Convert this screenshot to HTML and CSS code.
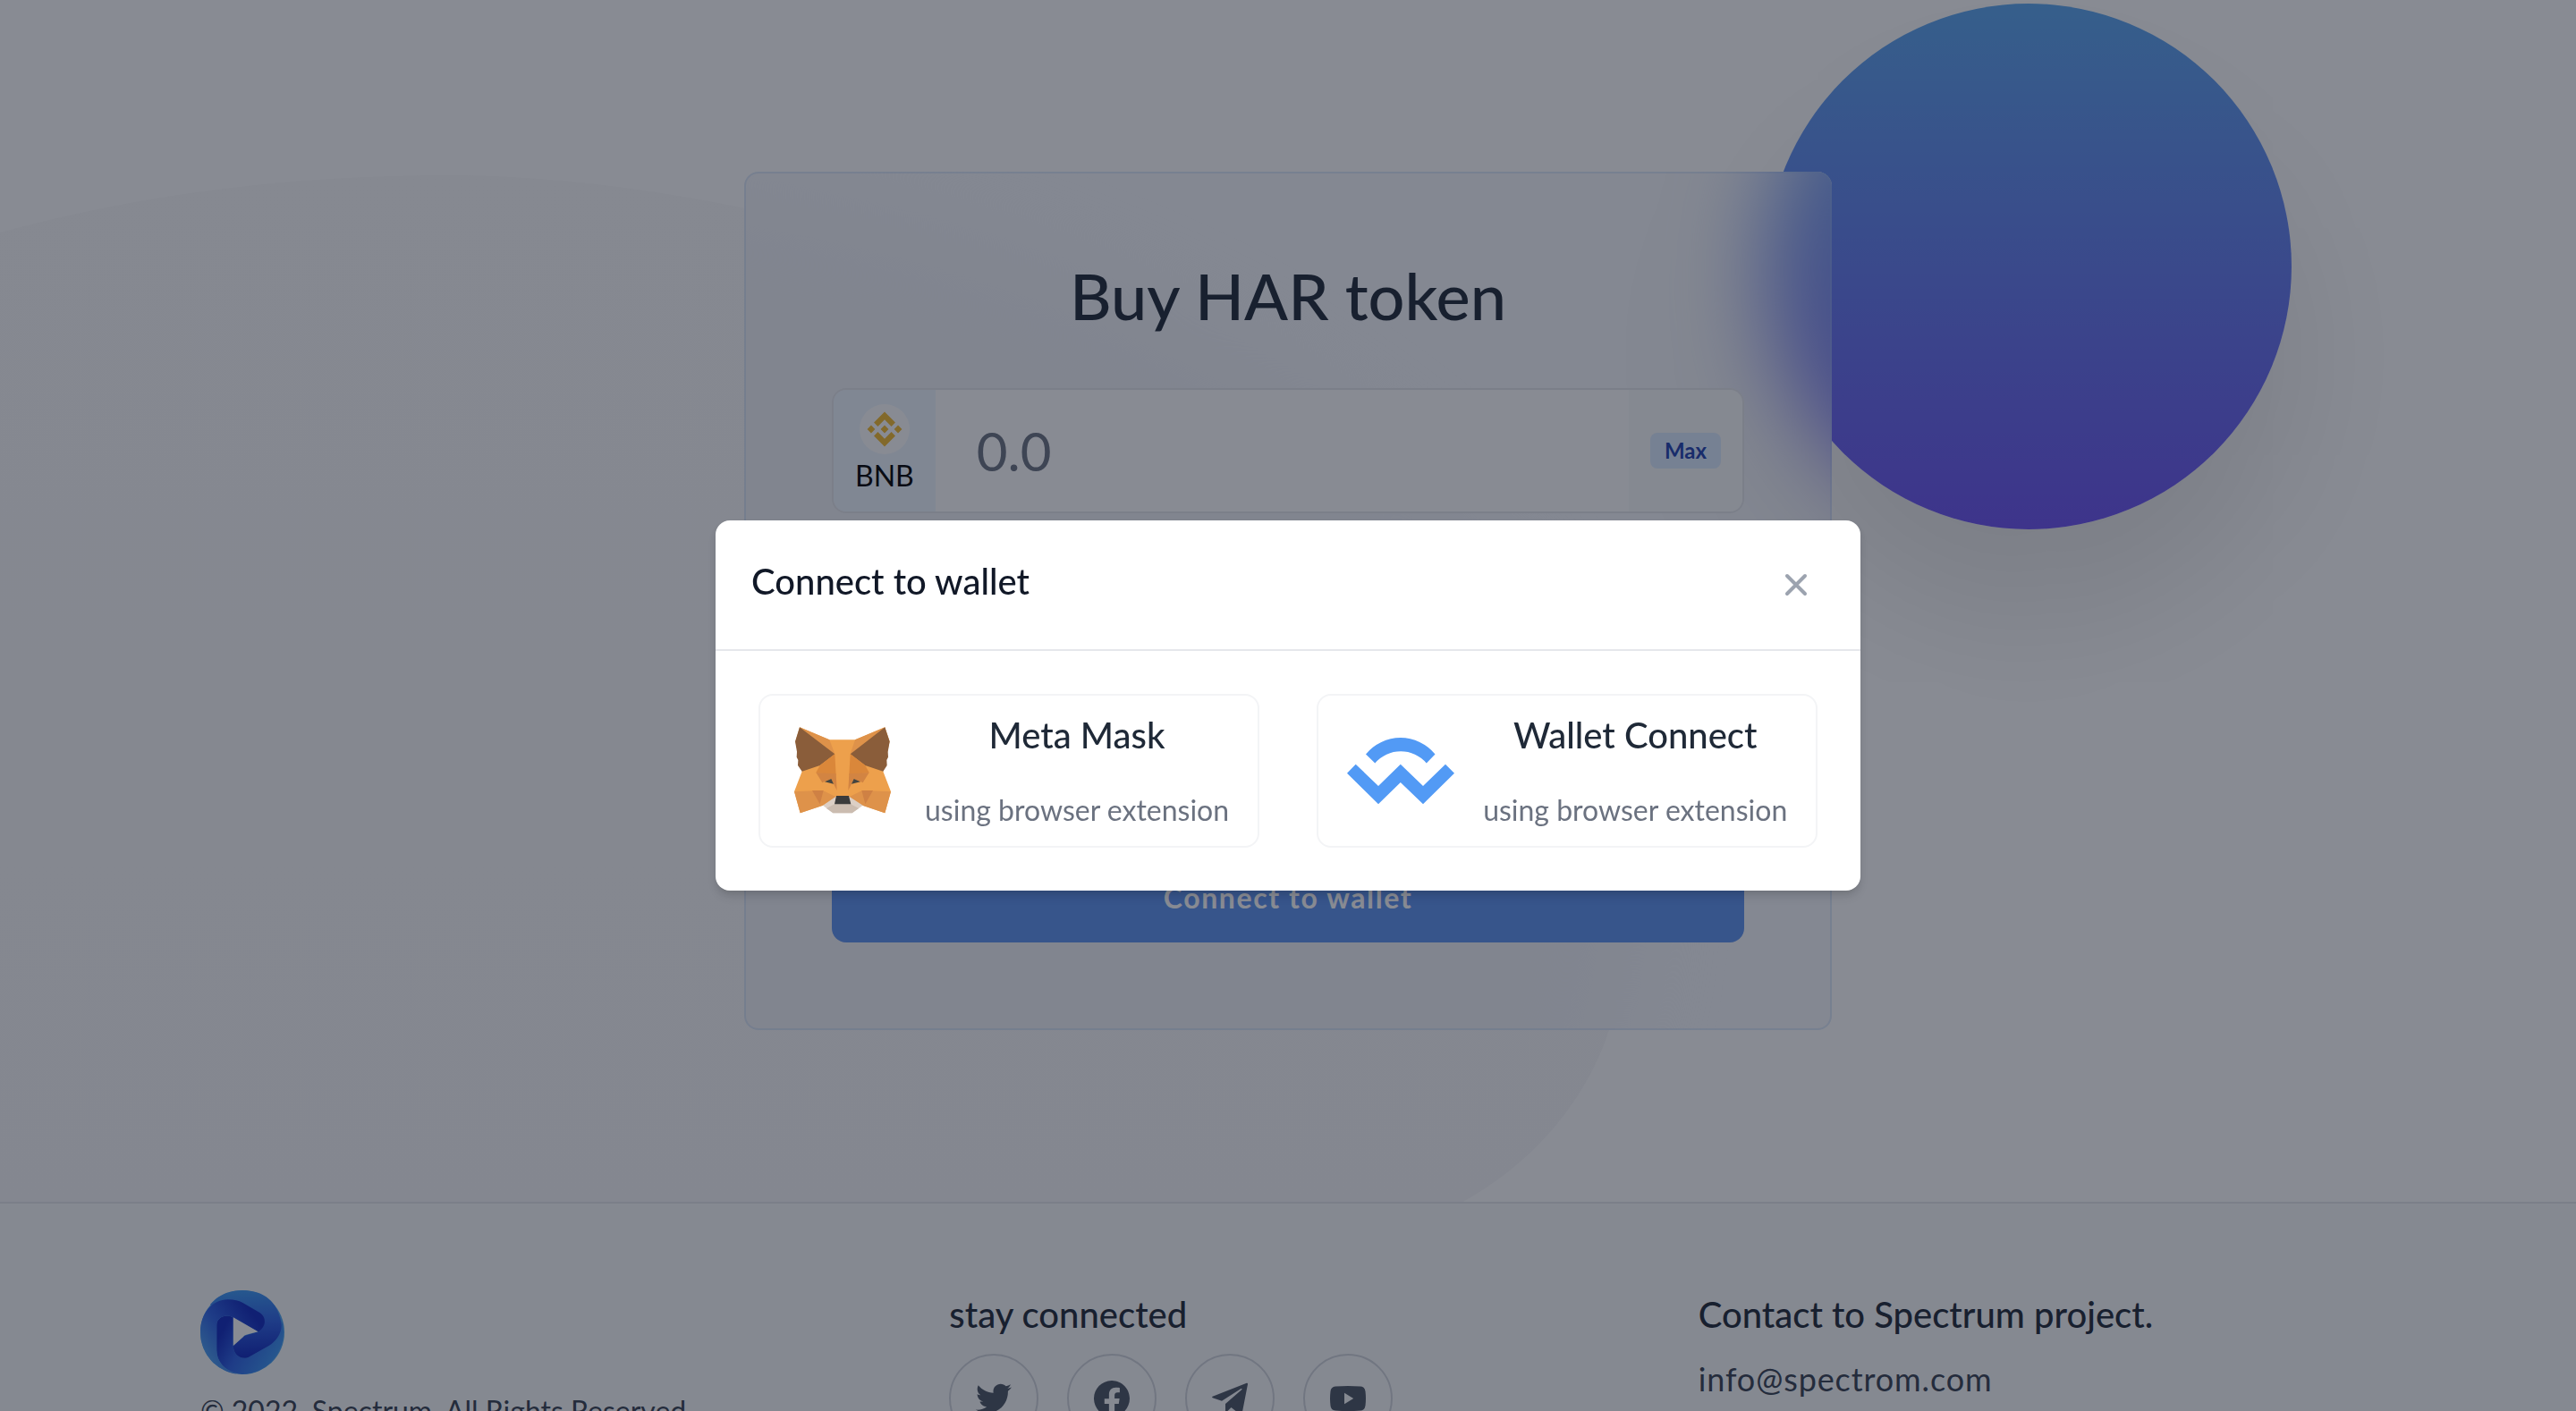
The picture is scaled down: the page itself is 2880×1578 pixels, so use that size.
FILE: index.html
```html
<!DOCTYPE html>
<html lang="en">
<head>
    <meta charset="UTF-8">
    <meta name="viewport" content="width=device-width, initial-scale=1.0">
    <title>Spectrum - Buy HAR token</title>
    <link rel="stylesheet" href="styles.css">
</head>
<body>
    <main class="hero">
        <svg class="blob" viewBox="0 0 2880 1344" preserveAspectRatio="none" aria-hidden="true">
            <defs>
                <linearGradient id="blobFill" x1="0" y1="0" x2="0" y2="1">
                    <stop offset="0" stop-color="#fafafa"/>
                    <stop offset="1" stop-color="#f7f7f8"/>
                </linearGradient>
            </defs>
            <path fill="url(#blobFill)" d="M0 260C160 216 330 196 500 196C1000 196 1810 500 1814 1060C1814 1170 1750 1280 1636 1344H0Z"/>
        </svg>

        <div class="buy">
            <div class="ball"></div>
            <div class="glass">
                <div class="glass-blob"></div>
                <div class="ball"></div>
            </div>
            <form class="card">
                <h1>Buy HAR token</h1>
                <div class="amount">
                    <label class="coin" for="amount">
                        <svg class="coin-icon" viewBox="1.6 1.6 28.8 28.8" aria-hidden="true">
                            <path fill="#f3ba2f" d="M12.116 14.404L16 10.52l3.886 3.886 2.26-2.26L16 6l-6.144 6.144 2.26 2.26zM6 16l2.26-2.26L10.52 16l-2.26 2.26L6 16zm6.116 1.596L16 21.48l3.886-3.886 2.26 2.259L16 26l-6.144-6.144-.003-.003 2.263-2.257zM21.48 16l2.26-2.26L26 16l-2.26 2.26L21.48 16zM18.294 16L16 18.294 13.706 16 16 13.706z"/>
                        </svg>
                        <span>BNB</span>
                    </label>
                    <input type="text" id="amount" placeholder="0.0">
                    <div class="max-cell">
                        <button type="button" class="max">Max</button>
                    </div>
                </div>
                <button type="button" class="connect">Connect to wallet</button>
            </form>
        </div>
    </main>

    <footer class="footer">
        <div>
            <svg class="logo" viewBox="0 0 94 94" role="img" aria-label="Spectrum">
                <defs>
                    <linearGradient id="lgTop" x1="10" y1="80" x2="68" y2="40" gradientUnits="userSpaceOnUse">
                        <stop offset="0" stop-color="#4ba0f2"/>
                        <stop offset=".45" stop-color="#2b60e6"/>
                        <stop offset="1" stop-color="#0f28be"/>
                    </linearGradient>
                    <linearGradient id="lgRight" x1="50" y1="0" x2="54" y2="74" gradientUnits="userSpaceOnUse">
                        <stop offset="0" stop-color="#3b98f5"/>
                        <stop offset=".5" stop-color="#2b60e6"/>
                        <stop offset="1" stop-color="#0f28be"/>
                    </linearGradient>
                    <linearGradient id="lgBottom" x1="24" y1="46" x2="84" y2="80" gradientUnits="userSpaceOnUse">
                        <stop offset="0" stop-color="#0f28be"/>
                        <stop offset=".4" stop-color="#2b60e6"/>
                        <stop offset="1" stop-color="#3b98f5"/>
                    </linearGradient>
                </defs>
                <circle cx="47" cy="47" r="47" fill="#4ba4f0"/>
                <path fill="url(#lgBottom)" d="M18.200 38.700C18.200 30 29 26 36.800 30.300V62C36.500 72 46 79 55 74.300L76.700 62C85 57 90 46 91 34A47 47 0 0 1 47 94C28 92 18.200 80 18.200 67Z"/>
                <path fill="url(#lgRight)" d="M11 16C20 5 33 0 47 0C72 0 86 14 90 34C93 46 85 57 76.700 62L55 74.300C46 79 36.500 72 36.800 62L49 51L64.500 46.300Z"/>
                <path fill="url(#lgTop)" d="M0 47C0 24 15 10 31 10.300C38 10.500 43 11.500 47 13.700L66.800 25.300C74 30 74 41 64.500 46.300L36.800 30.300C29 26 18.200 30 18.200 38.700V67C18.200 80 28 92 44 94A47 47 0 0 1 0 47Z"/>
                <path fill="#fff" d="M36.800 30.300L64.500 46.300L52 49.500Q49 50 47.500 52.500L36.800 62Z"/>
            </svg>
            <p class="copyright">© 2022. Spectrum. All Rights Reserved.</p>
        </div>
        <div>
            <h2>stay connected</h2>
            <div class="social">
                <a href="#" aria-label="Twitter">
                    <svg viewBox="0 0 512 512"><path d="M459.370 151.716c.325 4.548.325 9.097.325 13.645 0 138.720-105.583 298.558-298.558 298.558-59.452 0-114.680-17.219-161.137-47.106 8.447.974 16.568 1.299 25.340 1.299 49.055 0 94.213-16.568 130.274-44.832-46.132-.975-84.792-31.188-98.112-72.772 6.498.974 12.995 1.624 19.818 1.624 9.421 0 18.843-1.300 27.614-3.573-48.081-9.747-84.143-51.980-84.143-102.985v-1.299c13.969 7.797 30.214 12.670 47.431 13.319-28.264-18.843-46.781-51.005-46.781-87.391 0-19.492 5.197-37.360 14.294-52.954 51.655 63.675 129.300 105.258 216.365 109.807-1.624-7.797-2.599-15.918-2.599-24.040 0-57.828 46.782-104.934 104.934-104.934 30.213 0 57.502 12.670 76.670 33.137 23.715-4.548 46.456-13.320 66.599-25.340-7.798 24.366-24.366 44.833-46.132 57.827 21.117-2.273 41.584-8.122 60.426-16.243-14.292 20.791-32.161 39.308-52.628 54.253z"/></svg>
                </a>
                <a href="#" aria-label="Facebook">
                    <svg viewBox="0 0 16 16"><path d="M16 8.049c0-4.446-3.582-8.050-8-8.050C3.580 0-.002 3.603-.002 8.050c0 4.017 2.926 7.347 6.750 7.951v-5.625h-2.030V8.050H6.750V6.275c0-2.017 1.195-3.131 3.022-3.131.876 0 1.791.157 1.791.157v1.980h-1.009c-.993 0-1.303.621-1.303 1.258v1.510h2.218l-.354 2.326H9.250V16c3.824-.604 6.750-3.934 6.750-7.951z"/></svg>
                </a>
                <a href="#" aria-label="Telegram">
                    <svg viewBox="0 0 40 40"><path d="M38.800 2.800L.700 17.800q-1.200 .7 0 1.400L11 22.700L32.500 9Q34 8.600 33.400 10L15 26V36.500L21.500 30L31 37.500Q33 38 33.700 36.500L40 4Q40 2.400 38.800 2.800z"/></svg>
                </a>
                <a href="#" aria-label="YouTube">
                    <svg viewBox="0 0 40 40"><path fill-rule="evenodd" d="M6 6.500Q20 5.500 34 6.500Q39 7 39.500 12Q40.500 20 39.500 28Q39 33 34 33.500Q20 34.500 6 33.500Q1 33 .500 28Q-.500 20 .500 12Q1 7 6 6.500zM16 13.700V26.300L26.200 20z"/></svg>
                </a>
            </div>
        </div>
        <div>
            <h2>Contact to Spectrum project.</h2>
            <a class="email" href="mailto:info@spectrom.com">info@spectrom.com</a>
        </div>
    </footer>

    <div class="overlay">
        <div class="modal" role="dialog" aria-modal="true" aria-labelledby="modalTitle">
            <div class="modal-header">
                <h3 id="modalTitle">Connect to wallet</h3>
                <button type="button" class="close" aria-label="Close">
                    <svg viewBox="0 0 40 40"><path d="M10 10L30 30M30 10L10 30"/></svg>
                </button>
            </div>
            <div class="modal-body">
                <button type="button" class="wallet">
                    <svg viewBox="36 6 360 360" aria-hidden="true">
                        <path fill="#eda04c" d="M72 40L172 82H258L358 40L374 88L352 188L378 256L358 328L284 302H150L74 328L54 256L80 188L58 88Z"/>
                        <path fill="#de924a" d="M72 40L172 82L190 130ZM358 40L258 82L242 130Z"/>
                        <path fill="#8a5d3a" d="M72 40L57 88L63 122L62 140L67 150L66 168L80 188L140 168L190 130ZM358 40L374 88L368 122L369 140L364 150L365 168L352 188L292 168L242 130Z"/>
                        <path fill="#da873a" d="M190 130L140 168L127 192L194 200ZM242 130L292 168L305 192L238 200Z"/>
                        <path fill="#d28442" d="M127 192L194 196L197 252L186 230L178 213L156 222L148 226ZM305 192L238 196L235 252L246 230L254 213L276 222L284 226Z"/>
                        <path fill="#454540" d="M156 223L178 213L186 230ZM276 223L254 213L246 230Z"/>
                        <path fill="#de924a" d="M54 256L150 252L194 274L150 302L74 328ZM378 256L282 252L238 274L282 302L358 328Z"/>
                        <path fill="#eda04c" d="M150 252L186 232L198 268ZM282 252L246 232L234 268Z"/>
                        <path fill="#cf8144" d="M114 252H152L140 298ZM318 252H280L292 298Z"/>
                        <path fill="#dccfc5" d="M150 302L194 272H238L284 302L248 328H184Z"/>
                        <path fill="#cbbcb0" d="M162 312L190 297H242L270 312L248 328H184Z"/>
                        <path fill="#3b3b3b" d="M195 270H237L244 298H189Z"/>
                    </svg>
                    <span class="wallet-text">
                        <span class="wallet-name">Meta Mask</span>
                        <span class="wallet-note">using browser extension</span>
                    </span>
                </button>
                <button type="button" class="wallet">
                    <svg viewBox="0 0 120 120" aria-hidden="true">
                        <path fill="#529af5" d="M21 41.500A50 50 0 0 1 98.500 41.500L88.800 51.500A38 38 0 0 0 31.300 51.500ZM9.700 52.700L35 77L59.800 52.700L85 77L110 52.700L120 62.700L85 97.300L59.800 73L35 97.300L0 62.700Z"/>
                    </svg>
                    <span class="wallet-text">
                        <span class="wallet-name">Wallet Connect</span>
                        <span class="wallet-note">using browser extension</span>
                    </span>
                </button>
            </div>
        </div>
    </div>
</body>
</html>
```
FILE: styles.css
```css
* {
    box-sizing: border-box;
}
body {
    font-family: Lato, sans-serif;
    font-size: 32px;
    line-height: 48px;
    color: #1f2937;
    background-color: #fff;
    margin: 0;
    height: 100vh;
    overflow: hidden;
}
h1, h2, h3, p {
    margin: 0;
    font-weight: 500;
}
button, input {
    font-family: inherit;
}
button {
    cursor: pointer;
}

/* buy section */
.hero {
    position: relative;
    padding: 192px 0;
    background-color: #fff;
}
.blob {
    position: absolute;
    top: 0;
    left: 0;
    width: 100%;
    height: 100%;
}
.buy {
    position: relative;
    width: 100%;
    max-width: 1216px;
    margin: 0 auto;
}
.ball {
    position: absolute;
    top: -188px;
    right: -514px;
    width: 588px;
    height: 588px;
    border-radius: 50%;
    background: linear-gradient(#5aa6ee, #6a50ee);
    box-shadow: 0 100px 160px rgba(0, 0, 0, 0.1);
}
/* frosted copy of what lies behind the card */
.glass {
    position: absolute;
    inset: 0;
    border-radius: 16px;
    background-color: #fff;
    overflow: hidden;
}
.glass .ball {
    filter: blur(48px);
}
.glass-blob {
    position: absolute;
    top: 4px;
    left: -1652px;
    width: 2640px;
    height: 1620px;
    border-radius: 50%;
    background-color: #f8f8f9;
    filter: blur(48px);
}
.card {
    position: relative;
    display: flex;
    flex-direction: column;
    min-height: 960px;
    padding: 96px;
    border: 2px solid rgba(147, 184, 235, 0.25);
    border-radius: 16px;
    background-color: rgba(212, 220, 240, 0.2);
}
.card h1 {
    margin-bottom: 64px;
    font-size: 72px;
    line-height: 80px;
    text-align: center;
}
.amount {
    display: flex;
    border: 2px solid #e5e7eb;
    border-radius: 16px;
    overflow: hidden;
}
.coin {
    display: flex;
    flex-direction: column;
    align-items: center;
    padding: 16px 24px;
    color: #000;
    background-color: #eff6ff;
}
.coin-icon {
    width: 56px;
    height: 56px;
    border-radius: 50%;
    background-color: #fff;
}
.amount input {
    flex: 1;
    min-width: 0;
    padding: 0 46px;
    border: none;
    font-size: 60px;
    background-color: #fff;
}
.amount input::placeholder {
    color: #6b7280;
}
.max-cell {
    display: flex;
    align-items: center;
    padding: 0 24px;
    background-color: #f9fafb;
}
.max {
    padding: 4px 16px;
    border: none;
    border-radius: 8px;
    font-size: 24px;
    line-height: 32px;
    font-weight: 700;
    color: #1e40af;
    background-color: #dbeafe;
}
.connect {
    margin-top: auto;
    padding: 26px;
    border: none;
    border-radius: 16px;
    font-size: 32px;
    line-height: 48px;
    font-weight: 700;
    letter-spacing: 0.05em;
    color: #fff;
    background-color: #5d92ee;
}

/* footer */
.footer {
    position: relative;
    display: grid;
    grid-template-columns: repeat(3, 1fr);
    gap: 80px;
    padding: 96px 224px;
    border-top: 2px solid #e5e7eb;
    background-color: #f9fafb;
}
.footer h2 {
    margin-bottom: 16px;
    font-size: 40px;
    line-height: 56px;
}
.logo {
    display: block;
    width: 94px;
    height: 96px;
    margin-bottom: 16px;
}
.copyright {
    font-weight: 400;
    color: #374151;
}
.social {
    display: flex;
    gap: 32px;
}
.social a {
    display: flex;
    align-items: center;
    justify-content: center;
    width: 100px;
    height: 100px;
    border: 2px solid #d1d5db;
    border-radius: 50%;
}
.social svg {
    width: 40px;
    height: 40px;
    fill: #4b5563;
}
.email {
    font-size: 36px;
    line-height: 56px;
    letter-spacing: 0.025em;
    color: #374151;
    text-decoration: none;
}

/* wallet modal */
.overlay {
    position: fixed;
    inset: 0;
    display: flex;
    align-items: center;
    justify-content: center;
    background-color: rgba(17, 24, 39, 0.5);
}
.modal {
    width: 100%;
    max-width: 1280px;
    border-radius: 16px;
    background-color: #fff;
    box-shadow: 0 8px 12px -2px rgba(0, 0, 0, 0.1), 0 4px 8px -2px rgba(0, 0, 0, 0.1);
}
.modal-header {
    display: flex;
    align-items: flex-start;
    justify-content: space-between;
    padding: 40px;
    border-bottom: 2px solid #e5e7eb;
}
.modal-header h3 {
    font-size: 40px;
    line-height: 56px;
    color: #111827;
}
.close {
    padding: 12px;
    border: none;
    border-radius: 16px;
    background: none;
}
.close svg {
    display: block;
    width: 40px;
    height: 40px;
    fill: none;
    stroke: #9ca3af;
    stroke-width: 4;
    stroke-linecap: round;
}
.modal-body {
    display: grid;
    grid-template-columns: 1fr 1fr;
    gap: 64px;
    padding: 48px;
}
.wallet {
    display: flex;
    align-items: center;
    gap: 32px;
    padding: 16px 32px;
    border: 2px solid #f3f4f6;
    border-radius: 16px;
    background-color: #fff;
}
.wallet svg {
    flex: none;
    width: 120px;
    height: 120px;
}
.wallet-text {
    display: flex;
    flex: 1;
    flex-direction: column;
    gap: 32px;
    text-align: center;
    white-space: nowrap;
}
.wallet-name {
    font-size: 40px;
    line-height: 56px;
    font-weight: 500;
    color: #1f2937;
}
.wallet-note {
    font-size: 32px;
    line-height: 48px;
    color: #6b7280;
}
```
